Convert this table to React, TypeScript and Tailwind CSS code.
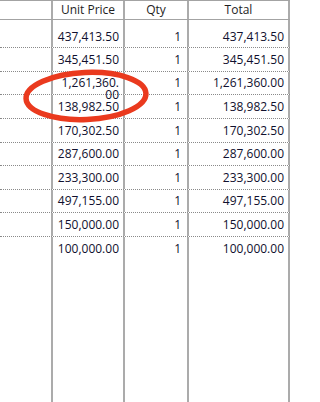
const rows = [
  { price: '437,413.50', qty: '1', total: '437,413.50', h: 'h-[27px] pt-[7px]' },
  { price: '345,451.50', qty: '1', total: '345,451.50', h: 'h-[23px]' },
  { price: '1,261,360.00', qty: '1', total: '1,261,360.00', h: 'h-[22px]', wrap: true },
  { price: '138,982.50', qty: '1', total: '138,982.50', h: 'h-[23px]' },
  { price: '170,302.50', qty: '1', total: '170,302.50', h: 'h-[23px]' },
  { price: '287,600.00', qty: '1', total: '287,600.00', h: 'h-[22px]' },
  { price: '233,300.00', qty: '1', total: '233,300.00', h: 'h-[23px]' },
  { price: '497,155.00', qty: '1', total: '497,155.00', h: 'h-[22px]' },
  { price: '150,000.00', qty: '1', total: '150,000.00', h: 'h-[23px]' },
  { price: '100,000.00', qty: '1', total: '100,000.00', h: 'h-[23px]', last: true },
]

const colLine = 'border-r-2 border-r-[#ababab]'

export default function App() {
  return (
    <div className="relative w-[320px] h-[402px] overflow-hidden bg-white text-[12px] leading-[12px] text-[#10102e] [font-family:'Open_Sans',sans-serif]">
      <div className="flex flex-col w-[290px] h-full">
        <div className="grid grid-cols-[53px_72px_64px_101px] h-[20px] border-y border-[#a3a3a3] text-[#1e1e1e]">
          <div className={colLine} />
          <div className={`${colLine} flex items-center justify-center`}>Unit Price</div>
          <div className={`${colLine} flex items-center justify-center`}>Qty</div>
          <div className={`${colLine} flex items-center justify-center`}>Total</div>
        </div>

        {rows.map((r, i) => (
          <div
            key={i}
            className={`grid grid-cols-[53px_72px_64px_101px] ${r.last ? '' : 'border-b border-dotted border-b-[#8a8a8a]'}`}
          >
            <div className={`${colLine} ${r.h}`} />
            {r.wrap ? (
              <div className={`${colLine} ${r.h} pt-[5px] pr-[4px] text-right`}>
                <div>1,261,360.</div>
                <div>00</div>
              </div>
            ) : (
              <div className={`${colLine} ${r.h} flex items-center justify-end pr-[4px]`}>{r.price}</div>
            )}
            <div className={`${colLine} ${r.h} flex items-center justify-end pr-[6px]`}>{r.qty}</div>
            <div className={`${colLine} ${r.h} flex items-center justify-end pr-[4px]`}>{r.total}</div>
          </div>
        ))}

        <div className="grid grid-cols-[53px_72px_64px_101px] flex-1">
          <div className={colLine} />
          <div className={colLine} />
          <div className={colLine} />
          <div className={colLine} />
        </div>
      </div>

      {/* red marker drawn over the wrapped cell */}
      <svg className="absolute left-0 top-0 pointer-events-none" width="320" height="402">
        <ellipse cx="86" cy="96" rx="60" ry="23.5" fill="none" stroke="#ea3a1e" strokeWidth="5.5" transform="rotate(-2.5 86 96)" />
      </svg>
    </div>
  )
}
